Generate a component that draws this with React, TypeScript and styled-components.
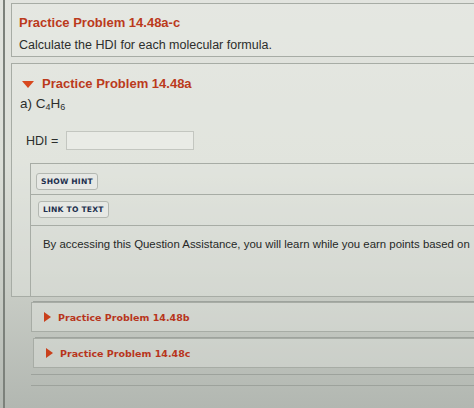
import React from "react";
import styled, { createGlobalStyle } from "styled-components";

const Global = createGlobalStyle`
  html, body { margin: 0; padding: 0; }
  *, *::before, *::after { box-sizing: border-box; }
  body {
    width: 474px;
    height: 408px;
    overflow: hidden;
    background: linear-gradient(180deg, #e2e4df 0%, #dcdfd8 40%, #c9cdc6 70%, #b2b7b1 100%);
    font-family: "Liberation Sans", Arial, sans-serif;
  }
`;

const Frame = styled.div`
  margin-left: 3px;
  padding: 3px 0 0 6px;
  border-left: 2px solid #7c817b;
  height: 408px;
  width: 600px;
`;

const Panel = styled.div`
  border: 1px solid #a7aca5;
  border-right: none;
  background: rgba(236, 238, 233, 0.35);
`;

const Header = styled(Panel)`
  padding: 11px 0 0 7px;
  height: 54px;
`;

const Title = styled.div`
  color: #bb3a1c;
  font-weight: bold;
  font-size: 13px;
  line-height: 16px;
`;

const Desc = styled.div`
  color: #2c2e2c;
  font-size: 12.5px;
  line-height: 16px;
  margin-top: 6px;
`;

const Main = styled(Panel)`
  margin-top: 6px;
  padding: 12px 0 0 8px;
  height: 234px;
  display: flex;
  flex-direction: column;
`;

const Toggle = styled.div`
  display: flex;
  align-items: center;
  gap: 8px;
  margin-left: 2px;
`;

const Tri = styled.span<{ $open?: boolean }>`
  display: inline-block;
  width: 0;
  height: 0;
  ${(p) =>
    p.$open
      ? `border-left: 6px solid transparent; border-right: 6px solid transparent; border-top: 7px solid #d8481e;`
      : `border-top: 5px solid transparent; border-bottom: 5px solid transparent; border-left: 7px solid #c9401c;`}
`;

const Formula = styled.div`
  color: #2c2e2c;
  font-size: 13.5px;
  margin-top: 4px;
  sub { font-size: 9px; vertical-align: -2px; }
`;

const HdiRow = styled.div`
  display: flex;
  align-items: center;
  gap: 8px;
  margin: 19px 0 0 6px;
  font-size: 12.5px;
  color: #2c2e2c;
`;

const Input = styled.div`
  width: 128px;
  height: 19px;
  border: 1px solid #c3c6c0;
  background: #e9ebe6;
`;

const Assist = styled.div`
  margin: 13px 0 0 10px;
  border-left: 1px solid #a7aca5;
  border-top: 1px solid #a7aca5;
  flex: 1;
`;

const HintBox = styled.div`
  border-bottom: 1px solid #a7aca5;
`;

const HintRow = styled.div<{ $indent: number; $top: number; $h: number }>`
  padding: ${(p) => p.$top}px 0 0 ${(p) => p.$indent}px;
  height: ${(p) => p.$h}px;
  & + & { border-top: 1px solid #a7aca5; }
`;

const Btn = styled.span`
  display: inline-block;
  padding: 3px 4px 3px;
  font-family: "DejaVu Sans", Verdana, sans-serif;
  font-weight: bold;
  font-size: 7.6px;
  line-height: 9px;
  letter-spacing: 0.2px;
  color: #22304f;
  background: #e6e8e4;
  border: 1px solid #b4b8b2;
  border-radius: 3px;
`;

const AssistText = styled.div`
  padding: 12px 0 0 12px;
  font-size: 11.4px;
  color: #262826;
  white-space: nowrap;
`;

const SubRow = styled(Panel)<{ $indent: number }>`
  margin-left: ${(p) => p.$indent}px;
  height: 30px;
  display: flex;
  align-items: center;
  gap: 7px;
  padding-left: 12px;
  box-shadow: 0 -3px 0 -2px #9ea39d;
`;

const SubTitle = styled.span`
  color: #b8351c;
  font-family: "DejaVu Sans", Verdana, sans-serif;
  font-weight: bold;
  font-size: 9.5px;
`;

const Rows = styled.div`
  display: flex;
  flex-direction: column;
  gap: 6px;
  margin-top: 5px;
`;

const Line = styled.div`
  border-top: 1px solid #9da29c;
  margin-left: 20px;
  & + & { margin-top: 4px; }
`;

export default function App() {
  return (
    <>
      <Global />
      <Frame>
        <Header>
          <Title>Practice Problem 14.48a-c</Title>
          <Desc>Calculate the HDI for each molecular formula.</Desc>
        </Header>
        <Main>
          <Toggle>
            <Tri $open />
            <Title>Practice Problem 14.48a</Title>
          </Toggle>
          <Formula>
            a) C<sub>4</sub>H<sub>6</sub>
          </Formula>
          <HdiRow>
            HDI =<Input />
          </HdiRow>
          <Assist>
            <HintBox>
              <HintRow $indent={5} $top={6} $h={30}>
                <Btn>SHOW HINT</Btn>
              </HintRow>
              <HintRow $indent={7} $top={3} $h={31}>
                <Btn>LINK TO TEXT</Btn>
              </HintRow>
            </HintBox>
            <AssistText>
              By accessing this Question Assistance, you will learn while you earn points based on
            </AssistText>
          </Assist>
        </Main>
        <Rows>
          <SubRow $indent={20}>
            <Tri />
            <SubTitle>Practice Problem 14.48b</SubTitle>
          </SubRow>
          <SubRow $indent={22}>
            <Tri />
            <SubTitle>Practice Problem 14.48c</SubTitle>
          </SubRow>
          <Line />
          <Line />
        </Rows>
      </Frame>
    </>
  );
}
